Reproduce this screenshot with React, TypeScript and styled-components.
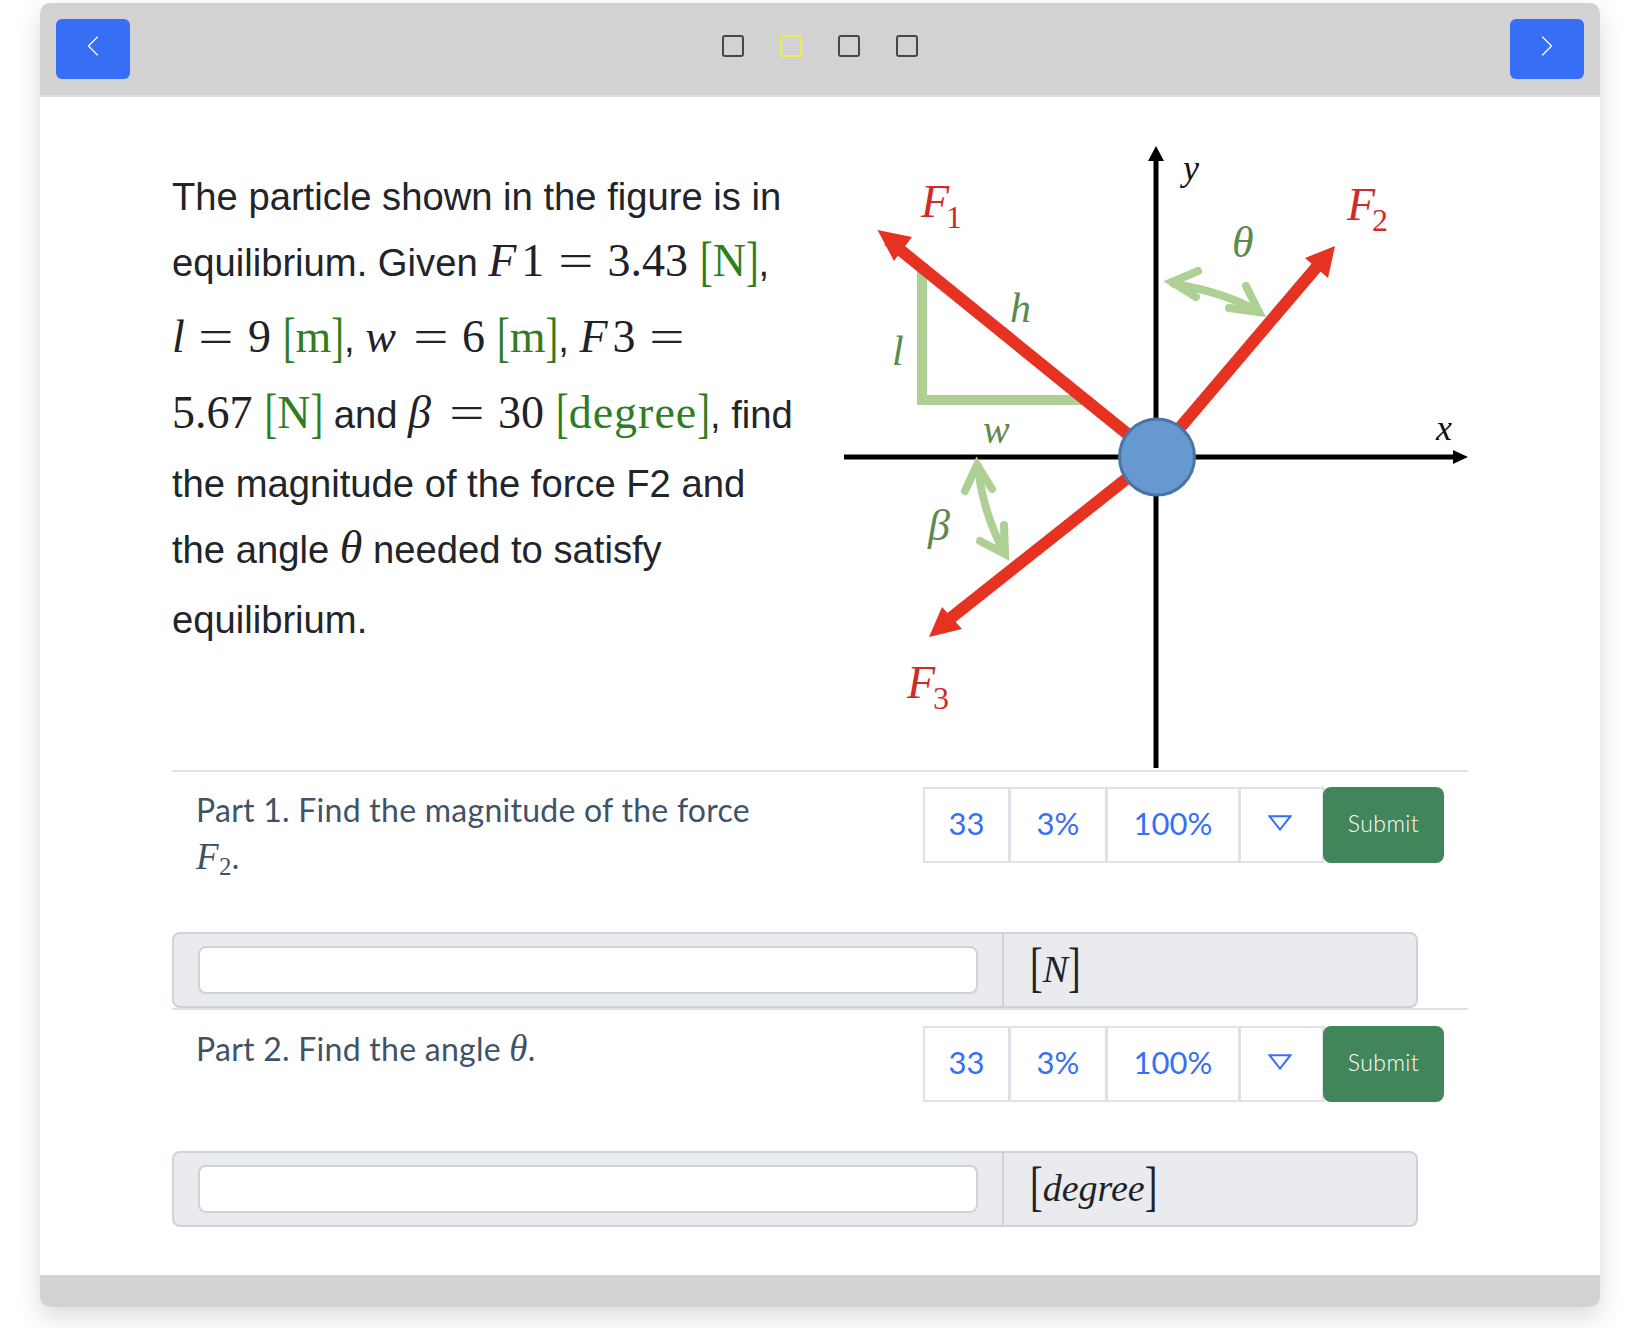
import React from "react";
import styled, { createGlobalStyle } from "styled-components";
import { ChevronLeft, ChevronRight } from "lucide-react";

const GlobalStyle = createGlobalStyle`
  html, body {
    margin: 0;
    padding: 0;
    background: #fff;
  }
  body {
    font-family: "Liberation Sans", Arial, sans-serif;
    color: #212529;
  }
`;

const Page = styled.div`
  width: 1640px;
  height: 1328px;
  padding: 3px 40px 0;
  box-sizing: border-box;
  overflow: hidden;
`;

const Card = styled.div`
  width: 1560px;
  background: #fff;
  border-radius: 10px;
  box-shadow: 0 10px 26px rgba(0, 0, 0, 0.15);
`;

const TopBar = styled.header`
  height: 94px;
  box-sizing: border-box;
  padding: 16px 16px 0;
  display: flex;
  justify-content: space-between;
  align-items: flex-start;
  background: #d2d2d2;
  border-bottom: 2px solid #dfdfdf;
  border-radius: 10px 10px 0 0;
`;

const NavButton = styled.button`
  width: 74px;
  height: 60px;
  border: 0;
  border-radius: 6px;
  background: #366ff6;
  color: #fff;
  padding: 0 0 6px;
  display: flex;
  align-items: center;
  justify-content: center;
`;

const Dots = styled.div`
  display: flex;
  gap: 36px;
  padding-top: 16px;
`;

const Dot = styled.span<{ $active?: boolean }>`
  width: 22px;
  height: 22px;
  box-sizing: border-box;
  border-radius: 3px;
  border: 2px solid ${(p) => (p.$active ? "#eeec48" : "#44474d")};
`;

const Content = styled.main`
  padding: 33px 132px 48px;
`;

const Problem = styled.section`
  display: flex;
  align-items: flex-start;
`;

const Statement = styled.div`
  flex: 0 0 668px;
  padding-top: 37px;
  font-size: 38.2px;
  color: #212529;
`;

const TextLine = styled.div<{ $gap?: number }>`
  height: 60px;
  line-height: 60px;
  margin-top: ${(p) => p.$gap ?? 0}px;
  white-space: nowrap;
`;

const MathI = styled.span<{ $track?: number }>`
  font-family: "Liberation Serif", serif;
  font-style: italic;
  font-size: 46px;
  color: #1f2226;
  letter-spacing: ${(p) => p.$track ?? 0}px;
`;

const MathN = styled.span`
  font-family: "Liberation Serif", serif;
  font-size: 46px;
  color: #1f2226;
`;

const MathRel = styled(MathN)`
  display: inline-block;
  margin: 0 18.6px;
  transform: scaleX(1.36);
  line-height: 1;
`;

const Unit = styled.span<{ $track?: number }>`
  font-family: "Liberation Serif", serif;
  font-size: 46px;
  color: #2f7d1f;
  margin-left: 12px;
  letter-spacing: ${(p) => p.$track ?? 0}px;
`;

const Bracket = styled.span`
  display: inline-block;
  font-size: 38px;
  letter-spacing: 0;
  line-height: 1;
  transform: scaleY(1.42);
  transform-origin: 50% 62%;
`;

const Figure = styled.svg`
  flex: 0 0 auto;
  display: block;
`;

const Part = styled.section<{ $top: number; $gap: number }>`
  border-top: 2px solid #dee1e6;
  padding-top: ${(p) => p.$top}px;
  --answer-gap: ${(p) => p.$gap}px;
`;

const PartHead = styled.div`
  display: flex;
  align-items: flex-start;
  padding: 0 24px 0 24px;
`;

const Prompt = styled.div`
  flex: 1;
  margin-top: -1px;
  margin-bottom: -3px;
  height: 98px;
  font-family: Lato, sans-serif;
  font-weight: 400;
  font-size: 32px;
  line-height: 47px;
  color: #3f5368;
  letter-spacing: 0.26px;
`;

const PromptOneLine = styled(Prompt)`
  height: 76px;
`;

const PromptMath = styled.span`
  font-family: "Liberation Serif", serif;
  font-style: italic;
  font-size: 37px;
`;

const Sub = styled.sub`
  font-style: normal;
  font-size: 25px;
  line-height: 0;
  vertical-align: -6px;
`;

const Stats = styled.div`
  display: flex;
  height: 76px;
`;

const Stat = styled.div<{ $w: number }>`
  width: ${(p) => p.$w}px;
  box-sizing: border-box;
  margin-right: -1px;
  padding-bottom: 5px;
  border: 2px solid #dee1e6;
  display: flex;
  align-items: center;
  justify-content: center;
  font-family: Lato, sans-serif;
  font-weight: 400;
  font-size: 31px;
  color: #366ff6;
`;

const CaretStat = styled(Stat)`
  padding-right: 4px;
`;

const Submit = styled.button`
  width: 121px;
  height: 76px;
  border: 0;
  border-radius: 8px;
  background: #41855a;
  color: #fff;
  font-family: Lato, sans-serif;
  font-weight: 300;
  font-size: 23px;
  letter-spacing: 0.4px;
  padding: 0 0 4px;
`;

const Answer = styled.div`
  width: 1246px;
  height: 76px;
  box-sizing: border-box;
  margin-top: var(--answer-gap);
  display: flex;
  background: #e9ebef;
  border: 2px solid #ced2d9;
  border-radius: 8px;
`;

const InputCell = styled.div`
  width: 830px;
  box-sizing: border-box;
  padding: 12px 24px;
  border-right: 2px solid #ced2d9;
`;

const AnswerInput = styled.input`
  width: 780px;
  height: 48px;
  box-sizing: border-box;
  background: #fff;
  border: 2px solid #ced2d9;
  border-radius: 8px;
  display: block;
`;

const Addon = styled.div`
  padding: 0 0 2px 26px;
  display: flex;
  align-items: center;
  font-family: "Liberation Serif", serif;
  font-size: 38px;
  color: #1f2226;
`;

const AddonMath = styled.span`
  font-style: italic;
`;

const BottomBar = styled.footer`
  height: 32px;
  background: #d2d2d2;
  border-radius: 0 0 10px 10px;
`;

const Caret = () => (
  <svg width="24" height="16" viewBox="0 0 24 16">
    <polygon points="1.5,1.2 22.5,1.2 12,14.5" fill="none" stroke="#366ff6" strokeWidth="2" />
  </svg>
);

const RED = "#e53221";
const GREEN = "#aed094";

const ForceArrow = ({ from, to, head }: { from: string; to: string; head: string }) => (
  <>
    <path d={`M${from} L${to}`} stroke={RED} strokeWidth="12" fill="none" />
    <polygon points={head} fill={RED} />
  </>
);

const labelFont = { fontFamily: "'Liberation Serif', serif", fontStyle: "italic" as const };

const Diagram = () => (
  <Figure width="630" height="640" viewBox="840 130 630 640">
    {/* green triangle */}
    <path d="M922 268 V400 H1085" stroke={GREEN} strokeWidth="10" fill="none" />

    {/* axes */}
    <path d="M1156 160 V768" stroke="#000" strokeWidth="5" />
    <polygon points="1156,146 1148,161 1164,161" fill="#000" />
    <path d="M844 457 H1454" stroke="#000" strokeWidth="5" />
    <polygon points="1468,457 1453,450 1453,464" fill="#000" />

    {/* angle arrows */}
    <g stroke={GREEN} strokeWidth="8" fill="none" strokeLinecap="round" strokeLinejoin="miter">
      <path d="M1174 284 Q1224 292 1259 312" />
      <path d="M1198 271 L1172 282 L1196 297" />
      <path d="M1246 286 L1259 312 L1229 308" />
      <path d="M978 466 Q982 510 1004 552" />
      <path d="M965 491 L977 465 L992 489" />
      <path d="M1004 525 L1005 554 L980 541" />
    </g>

    {/* forces */}
    <ForceArrow from="1130,436" to="888,240" head="877.5,230 912,237 894,261" />
    <ForceArrow from="1178,430" to="1326,256" head="1335,246 1305,258 1328,278" />
    <ForceArrow from="1130,476" to="942,625" head="929,637 942,607 962,629" />

    <ellipse cx="1157" cy="457" rx="37.5" ry="38" fill="#6699d0" stroke="#4c73a3" strokeWidth="3" />

    {/* labels */}
    <text x="1183" y="180" fontSize="36" fill="#111" style={labelFont}>y</text>
    <text x="1436" y="440" fontSize="36" fill="#111" style={labelFont}>x</text>
    <text x="921" y="217" fontSize="46" fill="#cf2b2b" style={labelFont}>F</text>
    <text x="946" y="228" fontSize="32" fill="#cf2b2b" fontFamily="'Liberation Serif', serif">1</text>
    <text x="1347" y="220" fontSize="46" fill="#cf2b2b" style={labelFont}>F</text>
    <text x="1372" y="231" fontSize="32" fill="#cf2b2b" fontFamily="'Liberation Serif', serif">2</text>
    <text x="907" y="698" fontSize="46" fill="#cf2b2b" style={labelFont}>F</text>
    <text x="933" y="709" fontSize="32" fill="#cf2b2b" fontFamily="'Liberation Serif', serif">3</text>
    <text x="1232" y="257" fontSize="44" fill="#5c8a4c" style={labelFont}>θ</text>
    <text x="1010" y="322" fontSize="42" fill="#5c8a4c" style={labelFont}>h</text>
    <text x="892" y="365" fontSize="42" fill="#5c8a4c" style={labelFont}>l</text>
    <text x="983" y="443" fontSize="40" fill="#5c8a4c" style={labelFont}>w</text>
    <text x="928" y="540" fontSize="44" fill="#5c8a4c" style={labelFont}>β</text>
  </Figure>
);

const UnitText = ({ children, track }: { children: React.ReactNode; track?: number }) => (
  <Unit $track={track}>
    <Bracket>[</Bracket>
    {children}
    <Bracket>]</Bracket>
  </Unit>
);

type PartRowProps = {
  prompt: React.ReactNode;
  unit: string;
  top: number;
  gap: number;
  oneLine?: boolean;
};

const PartRow = ({ prompt, unit, top, gap, oneLine }: PartRowProps) => (
  <Part $top={top} $gap={gap}>
    <PartHead>
      {oneLine ? <PromptOneLine>{prompt}</PromptOneLine> : <Prompt>{prompt}</Prompt>}
      <Stats>
        <Stat $w={87}>33</Stat>
        <Stat $w={98}>3%</Stat>
        <Stat $w={134}>100%</Stat>
        <CaretStat $w={85}>
          <Caret />
        </CaretStat>
      </Stats>
      <Submit>Submit</Submit>
    </PartHead>
    <Answer>
      <InputCell>
        <AnswerInput />
      </InputCell>
      <Addon>
        <Bracket>[</Bracket>
        <AddonMath>{unit}</AddonMath>
        <Bracket>]</Bracket>
      </Addon>
    </Answer>
  </Part>
);

export default function App() {
  return (
    <Page>
      <GlobalStyle />
      <Card>
        <TopBar>
          <NavButton aria-label="previous">
            <ChevronLeft size={36} strokeWidth={0.8} />
          </NavButton>
          <Dots>
            <Dot />
            <Dot $active />
            <Dot />
            <Dot />
          </Dots>
          <NavButton aria-label="next">
            <ChevronRight size={36} strokeWidth={0.8} />
          </NavButton>
        </TopBar>
        <Content>
          <Problem>
            <Statement>
              <TextLine>The particle shown in the figure is in</TextLine>
              <TextLine $gap={4}>
                equilibrium. Given <MathI $track={5}>F</MathI>
                <MathN>1</MathN>
                <MathRel>=</MathRel>
                <MathN>3.43</MathN>
                <UnitText>N</UnitText>,
              </TextLine>
              <TextLine $gap={16}>
                <MathI>l</MathI>
                <MathRel>=</MathRel>
                <MathN>9</MathN>
                <UnitText>m</UnitText>, <MathI $track={3}>w</MathI>
                <MathRel>=</MathRel>
                <MathN>6</MathN>
                <UnitText>m</UnitText>, <MathI $track={5}>F</MathI>
                <MathN>3</MathN>
                <MathRel>=</MathRel>
              </TextLine>
              <TextLine $gap={16}>
                <MathN>5.67</MathN>
                <UnitText>N</UnitText> and <MathI $track={4}>β</MathI>
                <MathRel>=</MathRel>
                <MathN>30</MathN>
                <UnitText track={1}>degree</UnitText>, find
              </TextLine>
              <TextLine $gap={11}>the magnitude of the force F2 and</TextLine>
              <TextLine $gap={4}>
                the angle <MathI>θ</MathI> needed to satisfy
              </TextLine>
              <TextLine $gap={12}>equilibrium.</TextLine>
            </Statement>
            <Diagram />
          </Problem>
          <PartRow
            top={15}
            gap={51}
            unit="N"
            prompt={
              <>
                Part 1. Find the magnitude of the force
                <br />
                <PromptMath>
                  F<Sub>2</Sub>
                </PromptMath>
                .
              </>
            }
          />
          <PartRow
            top={16}
            gap={49}
            unit="degree"
            oneLine
            prompt={
              <>
                Part 2. Find the angle <PromptMath>θ</PromptMath>.
              </>
            }
          />
        </Content>
        <BottomBar />
      </Card>
    </Page>
  );
}
